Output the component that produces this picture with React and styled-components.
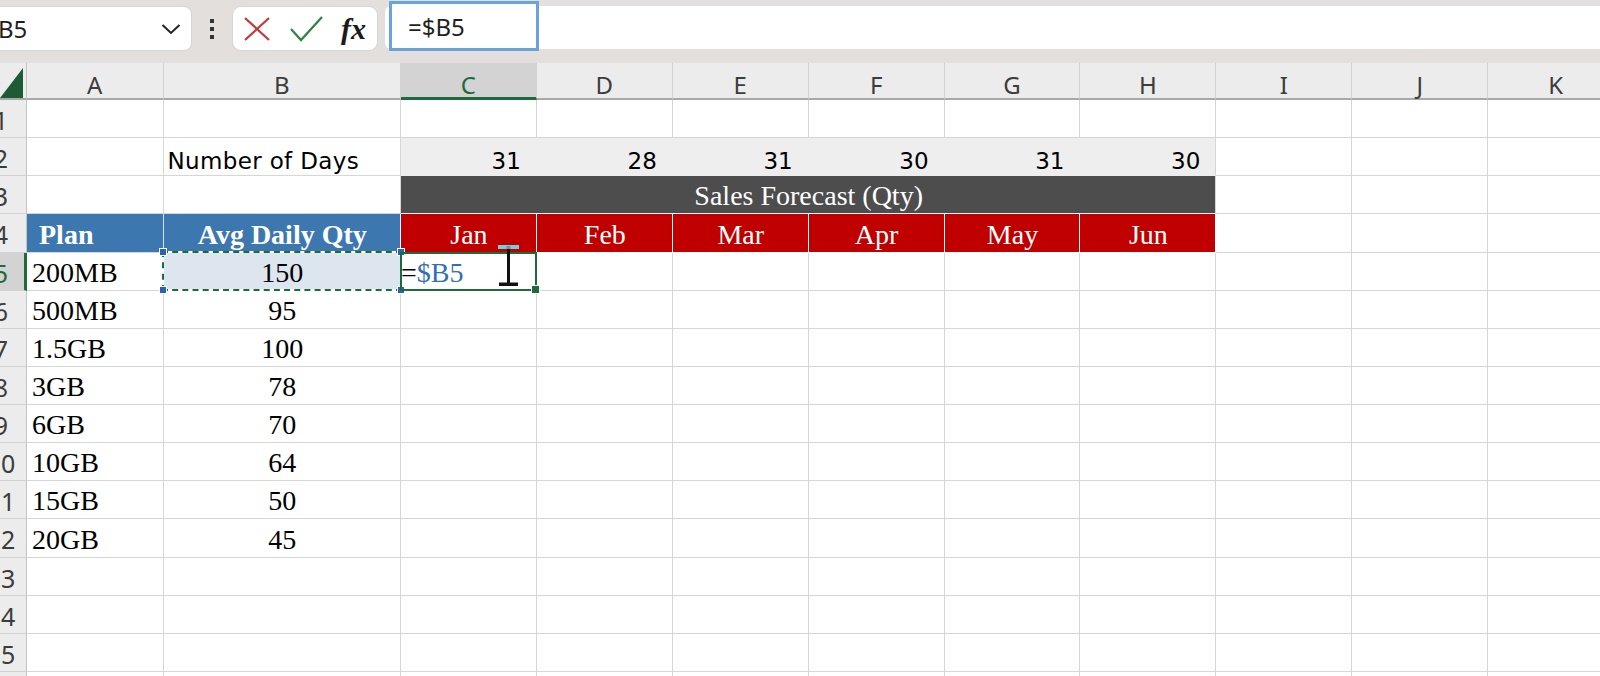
import React from 'react';
import styled, { createGlobalStyle } from 'styled-components';

const GRID = '#d6d6d6';
const GREEN = '#1d6a3a';
const SERIF = "'Liberation Serif', 'Times New Roman', serif";
const GOTHIC = "'DejaVu Sans', 'Liberation Sans', sans-serif";
const UI = "'Noto Sans', 'Open Sans', sans-serif";

const COLS = ['A', 'B', 'C', 'D', 'E', 'F', 'G', 'H', 'I', 'J', 'K'];
const days = [31, 28, 31, 30, 31, 30];
const months = ['Jan', 'Feb', 'Mar', 'Apr', 'May', 'Jun'];
const plans = [
  ['200MB', 150],
  ['500MB', 95],
  ['1.5GB', 100],
  ['3GB', 78],
  ['6GB', 70],
  ['10GB', 64],
  ['15GB', 50],
  ['20GB', 45],
];

const GlobalStyle = createGlobalStyle`
  html, body {
    margin: 0;
    padding: 0;
    background: #fff;
    overflow: hidden;
  }
`;

const Page = styled.div`
  width: 1600px;
  height: 676px;
  overflow: hidden;
  background: #fff;
`;

// formula bar strip
const Toolbar = styled.div`
  height: 63px;
  background: #e3dfdc;
  display: flex;
  align-items: flex-start;
`;

const NameBox = styled.div`
  box-sizing: border-box;
  margin: 7px 0 0 -12px;
  width: 203px;
  height: 43px;
  padding: 0 10px;
  background: #fff;
  border-radius: 7px;
  box-shadow: 0 0 0 1px #d9d5d1;
  display: flex;
  align-items: center;
  justify-content: space-between;
  font: 400 24px ${UI};
  color: #1f1f1f;
`;

const Dots = styled.div`
  width: 42px;
  padding-top: 19px;
  display: flex;
  flex-direction: column;
  align-items: center;
  gap: 4px;

  span {
    width: 4px;
    height: 4px;
    background: #333;
  }
`;

const FnBox = styled.div`
  box-sizing: border-box;
  margin-top: 7px;
  width: 144px;
  height: 43px;
  padding-left: 11px;
  background: #fff;
  border-radius: 8px;
  box-shadow: 0 0 0 1px #d9d5d1;
  display: flex;
  align-items: center;
`;

const Fx = styled.span`
  margin-left: 18px;
  font: italic 700 30px ${SERIF};
  color: #1a1a1a;
  line-height: 1;
`;

const FormulaBar = styled.div`
  flex: 1;
  margin: 6px 0 0 8px;
  height: 43px;
  background: #fff;
  border-radius: 6px 0 0 6px;
  display: flex;
  align-items: flex-start;
`;

const FormulaFocus = styled.div`
  box-sizing: border-box;
  margin: -5px 0 0 4px;
  width: 150px;
  height: 50px;
  padding-left: 16px;
  border: 3px solid #6aa2da;
  background: #fff;
  display: flex;
  align-items: center;
  font: 400 24px ${UI};
  color: #1f1f1f;
`;

const SheetWrap = styled.div`
  position: relative;
  height: 613px;
  overflow: hidden;
`;

const Sheet = styled.div`
  display: grid;
  grid-template-columns: 27px 136.5px 237.5px repeat(9, 135.9px);
  grid-template-rows: 37px repeat(16, 38.13px);
  width: 1624px;
`;

const Corner = styled.div`
  box-sizing: border-box;
  background: #ececec;
  border-right: 1px solid #c4c4c4;
  border-bottom: 2px solid #a8a8a8;
  display: flex;
  align-items: flex-end;
`;

const ColHead = styled.div`
  box-sizing: border-box;
  background: ${(p) => (p.$active ? '#d3d3d3' : '#ececec')};
  color: ${(p) => (p.$active ? GREEN : '#3c3c3c')};
  border-right: 1px solid #d2d2d2;
  border-bottom: ${(p) => (p.$active ? `3px solid ${GREEN}` : '2px solid #a8a8a8')};
  display: flex;
  justify-content: center;
  align-items: flex-start;
  padding-top: 10px;
  font: 400 24px/24px ${UI};
`;

const RowHead = styled.div`
  box-sizing: border-box;
  overflow: hidden;
  background: ${(p) => (p.$active ? '#d3d3d3' : '#ececec')};
  color: ${(p) => (p.$active ? GREEN : '#3c3c3c')};
  border-right: ${(p) => (p.$active ? `3px solid ${GREEN}` : '1px solid #c4c4c4')};
  border-bottom: 1px solid #d2d2d2;
  padding-top: 8px;
  font: 400 25px/25px ${UI};

  span {
    display: block;
    width: 60px;
    margin-left: -29px;
    text-align: center;
  }
`;

const justify = { left: 'flex-start', center: 'center', right: 'flex-end' };

const Cell = styled.div`
  box-sizing: border-box;
  position: relative;
  display: flex;
  align-items: flex-end;
  justify-content: ${(p) => justify[p.$align || 'left']};
  padding: 0 ${(p) => p.$padR ?? 4}px 1px ${(p) => p.$padL ?? 5}px;
  grid-column: ${(p) => (p.$span ? `span ${p.$span}` : 'auto')};
  background: ${(p) => p.$fill || '#fff'};
  border-right: 1px solid ${(p) => p.$lineR || GRID};
  border-bottom: 1px solid ${(p) => p.$lineB || GRID};
  color: ${(p) => p.$color || '#000'};
  font-family: ${(p) => (p.$gothic ? GOTHIC : SERIF)};
  font-size: ${(p) => (p.$gothic ? 23 : 28)}px;
  font-weight: ${(p) => (p.$bold ? 700 : 400)};
  letter-spacing: ${(p) => (p.$spaced ? '0.35px' : 'normal')};
  white-space: nowrap;
`;

const Ref = styled.span`
  color: #2f6fb6;
`;

// copy marquee around B5
const Marquee = styled.div`
  position: absolute;
  inset: -2px -2px -1px -2px;
  border: 2px solid #fff;
  z-index: 2;

  &::after {
    content: '';
    position: absolute;
    inset: -2px;
    border: 2px dashed ${GREEN};
  }
`;

const Handle = styled.i`
  position: absolute;
  width: 6px;
  height: 6px;
  background: #2862b0;
  border: 1px solid #fff;
  ${(p) => p.$x}: -5px;
  ${(p) => p.$y}: -5px;
  z-index: 3;
`;

const ActiveFrame = styled.div`
  position: absolute;
  inset: -1px -1px -1px -1px;
  border: 2.5px solid ${GREEN};
  z-index: 2;
`;

const FillHandle = styled.i`
  position: absolute;
  right: -5px;
  bottom: -5px;
  width: 7px;
  height: 7px;
  background: ${GREEN};
  border: 1px solid #fff;
`;

const Cursor = styled.svg`
  position: absolute;
  left: 498px;
  top: 182px;
  z-index: 5;
`;

const blanks = (n, key) =>
  Array.from({ length: n }, (_, i) => <Cell key={`${key}-${i}`} />);

const Chevron = () => (
  <svg width="20" height="12" viewBox="0 0 20 12">
    <path d="M1.5 2 L10 10 L18.5 2" fill="none" stroke="#222" strokeWidth="2" />
  </svg>
);

const Cancel = () => (
  <svg width="26" height="24" viewBox="0 0 26 24">
    <path d="M1 1 L25 23 M25 1 L1 23" stroke="#c23a3a" strokeWidth="2.2" fill="none" />
  </svg>
);

const Enter = () => (
  <svg width="33" height="26" viewBox="0 0 33 26" style={{ marginLeft: 20 }}>
    <path d="M1 13 L11 24 L32 1" stroke="#2e8443" strokeWidth="2.2" fill="none" />
  </svg>
);

export default function App() {
  return (
    <Page>
      <GlobalStyle />
      <Toolbar>
        <NameBox>
          <span>B5</span>
          <Chevron />
        </NameBox>
        <Dots>
          <span />
          <span />
          <span />
        </Dots>
        <FnBox>
          <Cancel />
          <Enter />
          <Fx>fx</Fx>
        </FnBox>
        <FormulaBar>
          <FormulaFocus>=$B5</FormulaFocus>
        </FormulaBar>
      </Toolbar>

      <SheetWrap>
        <Sheet>
          <Corner>
            <svg width="23" height="30" viewBox="0 0 23 30">
              <polygon points="23,0 23,30 0,30" fill="#1d5b34" />
            </svg>
          </Corner>
          {COLS.map((c) => (
            <ColHead key={c} $active={c === 'C'}>
              {c}
            </ColHead>
          ))}

          {/* row 1 */}
          <RowHead><span>1</span></RowHead>
          {blanks(11, 'r1')}

          {/* row 2 */}
          <RowHead><span>2</span></RowHead>
          <Cell />
          <Cell $gothic $spaced $padL={4}>Number of Days</Cell>
          {days.map((d, i) => (
            <Cell
              key={`d${i}`}
              $gothic
              $align="right"
              $padR={15}
              $fill="#eeeeee"
              $lineB="#eeeeee"
              $lineR={i === 5 ? GRID : '#eeeeee'}
            >
              {d}
            </Cell>
          ))}
          {blanks(3, 'r2')}

          {/* row 3 */}
          <RowHead><span>3</span></RowHead>
          <Cell />
          <Cell />
          <Cell $span={6} $align="center" $fill="#4d4d4d" $lineB="#ffffff" $color="#fff">
            Sales Forecast (Qty)
          </Cell>
          {blanks(3, 'r3')}

          {/* row 4 */}
          <RowHead><span>4</span></RowHead>
          <Cell $fill="#3c77b0" $lineR="#dbe3ec" $color="#fff" $bold $padL={12}>
            Plan
          </Cell>
          <Cell $fill="#3c77b0" $lineR="#ffffff" $color="#fff" $bold $align="center">
            Avg Daily Qty
          </Cell>
          {months.map((m) => (
            <Cell key={m} $fill="#c00000" $lineR="#ffffff" $lineB="#ffffff" $color="#fff" $align="center">
              {m}
            </Cell>
          ))}
          {blanks(3, 'r4')}

          {/* rows 5 - 12 */}
          {plans.map(([plan, qty], i) => {
            const first = i === 0;
            return (
              <React.Fragment key={plan}>
                <RowHead $active={first}>
                  <span>{i + 5}</span>
                </RowHead>
                <Cell>{plan}</Cell>
                <Cell $align="center" $fill={first ? '#dde6ef' : undefined}>
                  {qty}
                  {first && (
                    <Marquee>
                      <Handle $x="left" $y="top" />
                      <Handle $x="right" $y="top" />
                      <Handle $x="left" $y="bottom" />
                      <Handle $x="right" $y="bottom" />
                    </Marquee>
                  )}
                </Cell>
                {first ? (
                  <Cell $padL={0}>
                    =<Ref>$B5</Ref>
                    <ActiveFrame>
                      <FillHandle />
                    </ActiveFrame>
                  </Cell>
                ) : (
                  <Cell />
                )}
                {blanks(8, `p${i}`)}
              </React.Fragment>
            );
          })}

          {/* rows 13 - 16 */}
          {[13, 14, 15, 16].map((n) => (
            <React.Fragment key={n}>
              <RowHead><span>{n}</span></RowHead>
              {blanks(11, `e${n}`)}
            </React.Fragment>
          ))}
        </Sheet>

        <Cursor width="21" height="42" viewBox="0 0 21 42">
          <rect x="0" y="0" width="21" height="4" fill="#6fd1de" />
          <rect x="8.5" y="1" width="4" height="3" fill="#7a8f92" />
          <rect x="9" y="4" width="3" height="34" fill="#111" />
          <rect x="1" y="37.5" width="19" height="3.5" fill="#111" />
        </Cursor>
      </SheetWrap>
    </Page>
  );
}
